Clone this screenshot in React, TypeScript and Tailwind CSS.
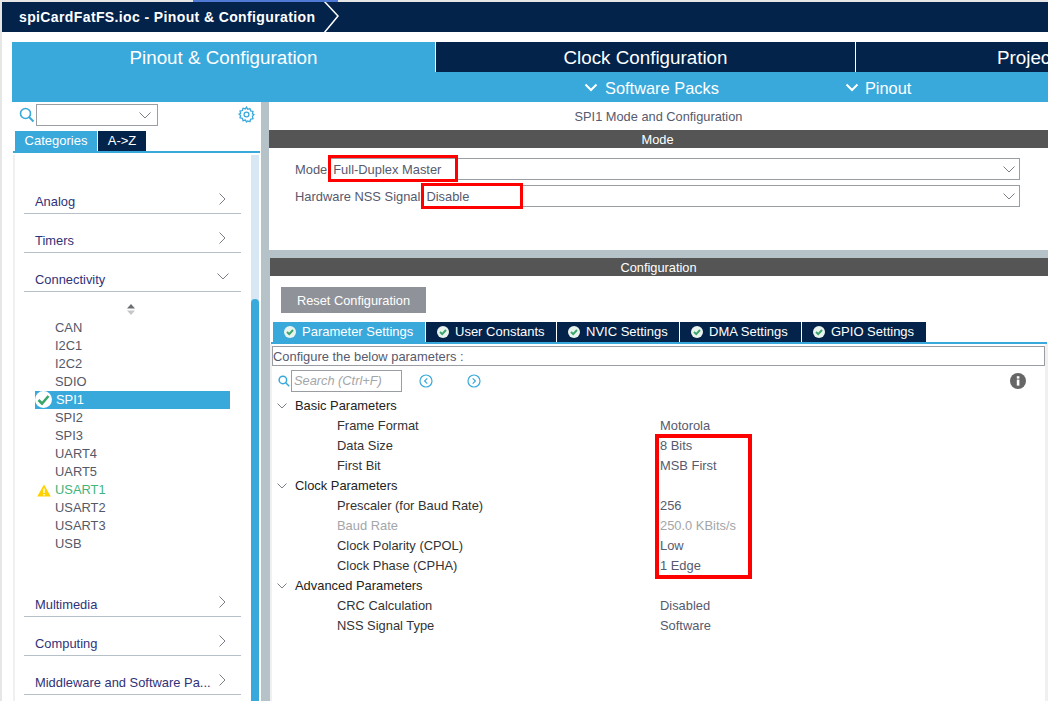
import React from "react";

const Chev = ({ dir = "right", className = "" }: { dir?: "right" | "down"; className?: string }) => (
  <svg width="12" height="12" viewBox="0 0 12 12" className={className} fill="none" stroke="#7b8088" strokeWidth="1">
    {dir === "right" ? <path d="M3.5 0.5 L9 6 L3.5 11.5" /> : <path d="M0.5 3.5 L6 9 L11.5 3.5" />}
  </svg>
);

const BoldChev = () => (
  <svg width="14" height="10" viewBox="0 0 14 10" fill="none" stroke="#ffffff" strokeWidth="2">
    <path d="M1.5 1.5 L7 7 L12.5 1.5" />
  </svg>
);

const Search = () => (
  <svg width="16" height="16" viewBox="0 0 16 16" fill="none" stroke="#39a9dc" strokeWidth="1.6">
    <circle cx="6.5" cy="6.5" r="5" />
    <path d="M10 10 L14.5 14.5" strokeWidth="2" />
  </svg>
);

const Gear = () => (
  <svg width="17" height="17" viewBox="0 0 24 24" fill="none" stroke="#39a9dc" strokeWidth="1.8">
    <circle cx="12" cy="12" r="3.4" />
    <path d="M12 1.5l1.6 3.1 3.3-1 .9 3.3 3.4.7-.9 3.4 2.2 1-2.2 2.6.9 3.3-3.4.8-.9 3.3-3.3-1L12 22.5l-1.6-2.7-3.3 1-.9-3.3-3.4-.8.9-3.3L1.5 11.5l2.2-1-.9-3.4 3.4-.7.9-3.3 3.3 1z" />
  </svg>
);

const TabCheck = () => (
  <svg width="12" height="12" viewBox="0 0 12 12">
    <circle cx="6" cy="6" r="6" fill="#e9f4ee" />
    <path d="M3 6 L5.2 8.2 L9 4" fill="none" stroke="#3aa66b" strokeWidth="1.9" />
  </svg>
);

const Category = ({ label, open }: { label: string; open?: boolean }) => (
  <div className="ml-[9px] mr-[10px] h-[39px] shrink-0 border-b border-[#b5c0c8] flex items-end pl-[11px] pr-[13px] justify-between relative">
    <span className="text-[12.9px] leading-[16px] pb-[3px] text-[#2f3277] whitespace-nowrap">{label}</span>
    <Chev dir={open ? "down" : "right"} className={open ? "mb-[9px] -mr-[1px]" : "mb-[8px]"} />
  </div>
);

const peripherals = ["CAN", "I2C1", "I2C2", "SDIO", "SPI1", "SPI2", "SPI3", "UART4", "UART5", "USART1", "USART2", "USART3", "USB"];

const Peripheral = ({ name }: { name: string }) => {
  const selected = name === "SPI1";
  const warn = name === "USART1";
  return (
    <div className={`h-[18px] flex items-center relative text-[12.9px] pl-[20px] ${selected ? "bg-[#39a9dc] text-white" : warn ? "text-[#3fb57c]" : "text-[#545868]"}`}>
      {selected && (
        <svg width="17" height="17" viewBox="0 0 17 17" className="absolute left-0 top-0">
          <circle cx="8.5" cy="8.5" r="8.5" fill="#ffffff" />
          <path d="M3.5 9 L7 12.5 L13.5 5" fill="none" stroke="#3aa66b" strokeWidth="2.6" />
        </svg>
      )}
      {warn && (
        <svg width="14" height="13" viewBox="0 0 14 13" className="absolute left-[2px] top-[3px]">
          <path d="M7 0.5 L13.8 12.5 L0.2 12.5 Z" fill="#ffd100" />
          <path d="M7 4.5 V9 M7 10 V11.5" stroke="#ffffff" strokeWidth="1.4" />
        </svg>
      )}
      <span className={selected ? "ml-[1px]" : ""}>{name}</span>
    </div>
  );
};

const Sidebar = () => (
  <div className="w-[249px] shrink-0 flex flex-col h-full">
    <div className="h-[29px] flex items-start pt-[2px] relative">
      <div className="ml-[7px] mt-[3px]"><Search /></div>
      <div className="ml-[1px] w-[122px] h-[22px] border border-[#9a9ea2] flex items-center justify-end pr-[6px]">
        <Chev dir="down" />
      </div>
      <div className="ml-[80px] mt-[2px]"><Gear /></div>
    </div>
    <div className="flex pl-[3px] h-[20px]">
      <div className="w-[82px] bg-[#39a9dc] text-white text-[13px] flex items-center justify-center">Categories</div>
      <div className="ml-[1px] w-[48px] bg-[#03234b] text-white text-[13px] flex items-center justify-center">A-&gt;Z</div>
    </div>
    <div className="h-[2px] bg-[#39a9dc] ml-[1px] w-[247px]" />
    <div className="flex-1 flex ml-[1px] w-[247px] border-l-[2px] border-[#f0f0f0] mt-[2px] relative min-h-0">
      <div className="flex-1 flex flex-col pt-[20px] min-w-0">
        <Category label="Analog" />
        <Category label="Timers" />
        <Category label="Connectivity" open />
        <div className="h-[27px] pt-[12px] pl-[112px] shrink-0">
          <svg width="8" height="12" viewBox="0 0 8 12">
            <path d="M4 0 L8 4.5 H0 Z" fill="#6b6f72" />
            <path d="M4 11 L8 6.5 H0 Z" fill="#c4c7c9" />
          </svg>
        </div>
        <div className="ml-[20px] mr-[21px] flex flex-col shrink-0">
          {peripherals.map((p) => <Peripheral key={p} name={p} />)}
        </div>
        <div className="h-[25px] shrink-0" />
        <Category label="Multimedia" />
        <Category label="Computing" />
        <Category label="Middleware and Software Pa..." />
      </div>
      <div className="w-[8px] mr-[1px] bg-[#d8e7f4] flex flex-col shrink-0">
        <div className="h-[144px] shrink-0" />
        <div className="flex-1 bg-[#39a9dc] rounded-t-[4px]" />
      </div>
    </div>
  </div>
);

const sections: { title: string; rows: [string, string, boolean?][] }[] = [
  { title: "Basic Parameters", rows: [["Frame Format", "Motorola"], ["Data Size", "8 Bits"], ["First Bit", "MSB First"]] },
  { title: "Clock Parameters", rows: [["Prescaler (for Baud Rate)", "256"], ["Baud Rate", "250.0 KBits/s", true], ["Clock Polarity (CPOL)", "Low"], ["Clock Phase (CPHA)", "1 Edge"]] },
  { title: "Advanced Parameters", rows: [["CRC Calculation", "Disabled"], ["NSS Signal Type", "Software"]] },
];

const tabs = [
  { label: "Parameter Settings", w: "w-[152px]", active: true },
  { label: "User Constants", w: "w-[130px]" },
  { label: "NVIC Settings", w: "w-[122px]" },
  { label: "DMA Settings", w: "w-[121px]" },
  { label: "GPIO Settings", w: "w-[124px]" },
];

const Select = ({ label, value }: { label: string; value: string }) => (
  <div className="flex items-center h-[22px] pl-[26px] pr-[28px] text-[12.9px]">
    <span className="text-[#565a6e] pt-[1px]">{label}</span>
    <div className="flex-1 h-[22px] ml-[2px] border border-[#9a9ea2] flex items-center justify-between pl-[3px] pr-[4px]">
      <span className="text-[#565a6e] pt-[1px]">{value}</span>
      <Chev dir="down" />
    </div>
  </div>
);

const RightPanel = () => (
  <div className="flex-1 min-w-0 flex flex-col h-full relative">
    <div className="h-[28px] flex items-center justify-center text-[12.8px] text-[#565a6e] shrink-0 pt-[1px]">SPI1 Mode and Configuration</div>
    <div className="h-[18px] bg-[#545554] text-white text-[12.8px] flex items-center justify-center shrink-0 pt-[1px] pr-[2px]">Mode</div>
    <div className="h-[102px] pt-[10px] flex flex-col gap-[5px] shrink-0">
      <Select label="Mode" value="Full-Duplex Master" />
      <Select label="Hardware NSS Signal" value="Disable" />
    </div>
    <div className="h-[8px] bg-[#b5c2c8] shrink-0" />
    <div className="flex-1 flex flex-col min-h-0 border-l border-[#b5c2c8]">
      <div className="h-[18px] bg-[#545554] text-white text-[12.8px] flex items-center justify-center shrink-0 pt-[1px] pr-[1px]">Configuration</div>
      <div className="ml-[11px] mt-[11px] w-[145px] h-[26px] bg-[#8f9399] text-white text-[12.8px] flex items-center justify-center shrink-0 pt-[1px]">Reset Configuration</div>
      <div className="flex gap-[1px] ml-[3px] mt-[9px] h-[20px] shrink-0">
        {tabs.map((t) => (
          <div key={t.label} className={`${t.w} flex items-center pl-[11px] gap-[6px] text-white text-[13px] ${t.active ? "bg-[#39a9dc]" : "bg-[#03234b]"}`}>
            <TabCheck />
            <span>{t.label}</span>
          </div>
        ))}
      </div>
      <div className="h-[2px] bg-[#39a9dc] mx-[1px] shrink-0" />
      <div className="flex-1 min-h-0 border-l-2 border-r-[3px] border-[#f0f0f0]">
        <div className="mt-[2px] h-[20px] border border-[#9a9ea2] text-[12.9px] text-[#565a6e] flex items-center pt-[1px]">Configure the below parameters :</div>
        <div className="flex items-center h-[20px] mt-[5px] ml-[6px] mr-[19px]">
          <svg width="12" height="12" viewBox="0 0 16 16" fill="none" stroke="#39a9dc" strokeWidth="2">
            <circle cx="6.5" cy="6.5" r="5" />
            <path d="M10 10 L15 15" />
          </svg>
          <div className="ml-[1px] w-[111px] h-[22px] border border-[#9a9ea2] text-[12.8px] italic text-[#a3a6aa] flex items-center pl-[2px]">Search (Ctrl+F)</div>
          <svg width="14" height="14" viewBox="0 0 14 14" fill="none" stroke="#39a9dc" className="ml-[17px]">
            <circle cx="7" cy="7" r="6" strokeWidth="1.2" />
            <path d="M8.3 4.3 L5.6 7 L8.3 9.7" strokeWidth="1.2" />
          </svg>
          <svg width="14" height="14" viewBox="0 0 14 14" fill="none" stroke="#39a9dc" className="ml-[34px]">
            <circle cx="7" cy="7" r="6" strokeWidth="1.2" />
            <path d="M5.7 4.3 L8.4 7 L5.7 9.7" strokeWidth="1.2" />
          </svg>
          <svg width="16" height="16" viewBox="0 0 16 16" className="ml-auto">
            <circle cx="8" cy="8" r="8" fill="#666666" />
            <rect x="6.8" y="6.6" width="2.6" height="6" fill="#ffffff" />
            <rect x="6.8" y="3.2" width="2.6" height="2.4" fill="#ffffff" />
          </svg>
        </div>
        <div className="mt-[5px] ml-[5px] text-[12.9px]">
          {sections.map((s) => (
            <div key={s.title}>
              <div className="h-[20px] flex items-center">
                <svg width="10" height="10" viewBox="0 0 10 10" fill="none" stroke="#7b8088">
                  <path d="M0.5 2.5 L5 7 L9.5 2.5" />
                </svg>
                <span className="ml-[8px] text-[#222222]">{s.title}</span>
              </div>
              {s.rows.map(([k, v, dim]) => (
                <div key={k} className="h-[20px] flex items-center">
                  <span className={`ml-[60px] w-[323px] ${dim ? "text-[#a3a6aa]" : "text-[#333333]"}`}>{k}</span>
                  <span className={dim ? "text-[#a3a6aa]" : "text-[#565a6e]"}>{v}</span>
                </div>
              ))}
            </div>
          ))}
        </div>
      </div>
    </div>
  </div>
);

export default function App() {
  return (
    <div className="w-[1048px] h-[701px] overflow-hidden relative bg-white font-['Liberation_Sans',Arial,sans-serif] flex flex-col">
      <div className="h-[2px] bg-[#e6e6e6] shrink-0 relative">
        <div className="absolute left-[193px] w-[145px] h-[2px] bg-[#4f7ad6]" />
      </div>
      <div className="h-[30px] bg-[#03234b] ml-[2px] flex items-center relative shrink-0">
        <span className="ml-[17px] text-white text-[14px] font-bold tracking-[0.38px] pt-[1px]">spiCardFatFS.ioc - Pinout &amp; Configuration</span>
        <svg width="18" height="30" viewBox="0 0 18 30" fill="none" stroke="#ffffff" strokeWidth="1.5" className="absolute left-[321px] top-0">
          <path d="M1 -1 L15 14 L1 31" />
        </svg>
      </div>
      <div className="absolute left-0 top-[2px] bottom-0 w-[2px] bg-[#e6e6e6]" />
      <div className="h-[10px] shrink-0" />
      <div className="ml-[12px] flex h-[30px] shrink-0 text-[18.8px]">
        <div className="w-[423px] bg-[#39a9dc] text-white flex items-center justify-center pt-[3px]">Pinout &amp; Configuration</div>
        <div className="w-[1px] bg-white" />
        <div className="w-[419px] bg-[#03234b] text-white flex items-center justify-center pt-[3px]">Clock Configuration</div>
        <div className="w-[1px] bg-white" />
        <div className="flex-1 bg-[#03234b] text-white pl-[141px] flex items-center whitespace-nowrap overflow-hidden pt-[3px]">Project Manager</div>
      </div>
      <div className="ml-[12px] h-[30px] bg-[#39a9dc] shrink-0 flex items-center text-[16.4px] text-white pt-[2px]">
        <div className="ml-[572px] flex items-center gap-[7px]"><BoldChev />Software Packs</div>
        <div className="ml-[126px] flex items-center gap-[6px]"><BoldChev />Pinout</div>
      </div>
      <div className="flex-1 min-h-0 flex ml-[12px]">
        <Sidebar />
        <div className="w-[8px] bg-[#b5c2c8] shrink-0" />
        <RightPanel />
      </div>
      <div className="absolute left-[328px] top-[155px] w-[130px] h-[27px] border-[3px] border-[#ff0000]" />
      <div className="absolute left-[421px] top-[183px] w-[102px] h-[26px] border-[3px] border-[#ff0000]" />
      <div className="absolute left-[655px] top-[434px] w-[97px] h-[145px] border-[4px] border-[#ff0000]" />
    </div>
  );
}
